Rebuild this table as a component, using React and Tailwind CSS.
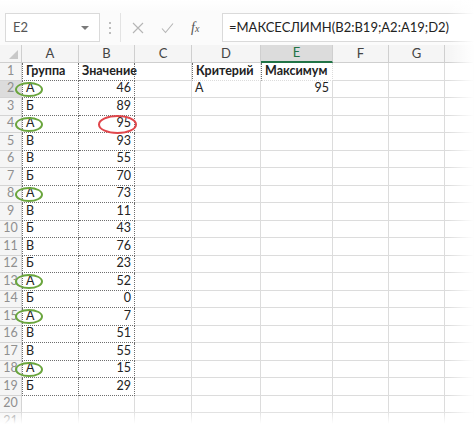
const rows = [
  ["Группа", "Значение", "Критерий", "Максимум"],
  ["А", "46", "А", "95"],
  ["Б", "89"],
  ["А", "95"],
  ["В", "93"],
  ["В", "55"],
  ["Б", "70"],
  ["А", "73"],
  ["В", "11"],
  ["Б", "43"],
  ["В", "76"],
  ["Б", "23"],
  ["А", "52"],
  ["Б", "0"],
  ["А", "7"],
  ["В", "51"],
  ["В", "55"],
  ["А", "15"],
  ["Б", "29"],
  [],
  [],
];

const circled = [2, 4, 8, 13, 15, 18];

const grid = "border-r border-b border-[#dcdcdc]";
const dotted = "border-r border-b border-dotted border-[#6e6e6e]";

function HeaderRow() {
  const heads = [
    ["A", "w-[57px]"],
    ["B", "w-[56px]"],
    ["C", "w-[57px]"],
    ["D", "w-[69px]"],
    ["E", "w-[72px]"],
    ["F", "w-[56px]"],
    ["G", "w-[56px]"],
    ["", "flex-1"],
  ];
  return (
    <div className="flex h-[18px] bg-[#f5f5f5] text-[13px] text-[#444]">
      <div className="w-[22px] border-r border-b border-[#cfcfcf] relative">
        <div className="absolute right-[3px] bottom-[3px] w-0 h-0 border-l-[9px] border-l-transparent border-b-[9px] border-b-[#c8c8c8]" />
      </div>
      {heads.map(([l, w]) => (
        <div
          key={l + w}
          className={
            w +
            " flex items-center justify-center border-r " +
            (l === "E"
              ? "bg-[#dcdcdc] text-[#217346] border-r-[#cfcfcf] border-b-2 border-b-[#217346]"
              : "border-b border-[#cfcfcf]")
          }
        >
          {l}
        </div>
      ))}
    </div>
  );
}

function Row({ n, data }) {
  const [a, b, d, e] = data;
  const inRange = n <= 19;
  const bold = n === 1 ? "font-bold" : "";
  return (
    <div className="flex h-[17.5px] text-[12.5px] text-[#222]">
      <div
        className={
          "w-[22px] flex items-center justify-center border-r border-b border-[#d4d4d4] text-[#8f8f8f] " +
          (n === 2 ? "bg-[#dcdcdc]" : "bg-[#f5f5f5]")
        }
      >
        {n}
      </div>
      <div
        className={
          "w-[57px] relative flex items-center px-[3px] " +
          (inRange ? dotted + " border-l" : grid) +
          " " +
          bold
        }
      >
        {a}
        {circled.includes(n) && (
          <div className="absolute left-[-8px] top-[1px] w-[28px] h-[15px] rounded-[50%] border-2 border-[#6aa53d]" />
        )}
      </div>
      <div
        className={
          "w-[56px] relative flex items-center px-[3px] " +
          (n === 1 ? "justify-start " : "justify-end ") +
          (inRange ? dotted : grid) +
          " " +
          bold
        }
      >
        {b}
        {n === 4 && (
          <div className="absolute left-[19px] top-[-1px] w-[39px] h-[19px] rounded-[50%] border-2 border-[#e0474c]" />
        )}
      </div>
      <div className={"w-[57px] " + grid} />
      <div
        className={
          "w-[69px] flex items-center px-[3px] " +
          grid +
          " " +
          bold +
          (n === 1 ? " border-l border-dotted border-l-[#6e6e6e]" : "")
        }
      >
        {d}
      </div>
      <div
        className={
          "w-[72px] flex items-center px-[3px] " +
          (n === 1 ? "justify-start border-l border-dotted border-l-[#6e6e6e] " : "justify-end ") +
          grid +
          " " +
          bold
        }
      >
        {e}
      </div>
      <div className={"w-[56px] " + grid} />
      <div className={"w-[56px] " + grid} />
      <div className={"flex-1 " + grid} />
    </div>
  );
}

function FormulaBar() {
  return (
    <div className="flex h-[29px] mt-[13px] mb-[3px] items-stretch text-[13px]">
      <div className="ml-[5px] w-[95px] bg-white border border-[#dadada] flex items-center pl-[7px] pr-[10px] justify-between text-[#555]">
        <span>E2</span>
        <div className="w-0 h-0 border-l-[4px] border-r-[4px] border-t-[4px] border-l-transparent border-r-transparent border-t-[#7a7a7a]" />
      </div>
      <div className="w-[20px] flex flex-col items-center justify-center gap-[3px]">
        <div className="w-[2px] h-[2px] bg-[#bdbdbd]" />
        <div className="w-[2px] h-[2px] bg-[#bdbdbd]" />
        <div className="w-[2px] h-[2px] bg-[#bdbdbd]" />
      </div>
      <div className="w-[102px] flex items-center border-l border-[#e3e3e3]">
        <svg width="12" height="12" viewBox="0 0 12 12" className="ml-[11px]">
          <path d="M1 1L11 11M11 1L1 11" stroke="#b5b5b5" strokeWidth="1.1" fill="none" />
        </svg>
        <svg width="13" height="12" viewBox="0 0 13 12" className="ml-[17px]">
          <path d="M1 6.5L4.5 10.5L12 1.5" stroke="#b5b5b5" strokeWidth="1.1" fill="none" />
        </svg>
        <span className="ml-[17px] italic text-[#555] text-[14px] [font-family:'Liberation_Serif',serif]">
          f<span className="text-[10px]">x</span>
        </span>
      </div>
      <div className="flex-1 bg-white border border-[#dadada] border-r-0 flex items-center pl-[6px] text-[13px] text-[#222]">
        =МАКСЕСЛИМН(B2:B19;A2:A19;D2)
      </div>
    </div>
  );
}

export default function App() {
  return (
    <div className="w-[474px] h-[424px] relative overflow-hidden bg-[#fbfbfb] [font-family:Lato,'Liberation_Sans',sans-serif]">
      <FormulaBar />
      <div className="bg-white">
        <HeaderRow />
        {rows.map((r, i) => (
          <Row key={i} n={i + 1} data={r} />
        ))}
      </div>
      {/* fade edges */}
      <div className="absolute top-0 left-0 right-0 h-[12px] bg-gradient-to-b from-white to-transparent" />
      <div className="absolute top-0 bottom-0 right-0 w-[26px] bg-gradient-to-l from-white to-transparent" />
      <div className="absolute left-0 right-0 bottom-0 h-[14px] bg-gradient-to-t from-white to-transparent" />
    </div>
  );
}
